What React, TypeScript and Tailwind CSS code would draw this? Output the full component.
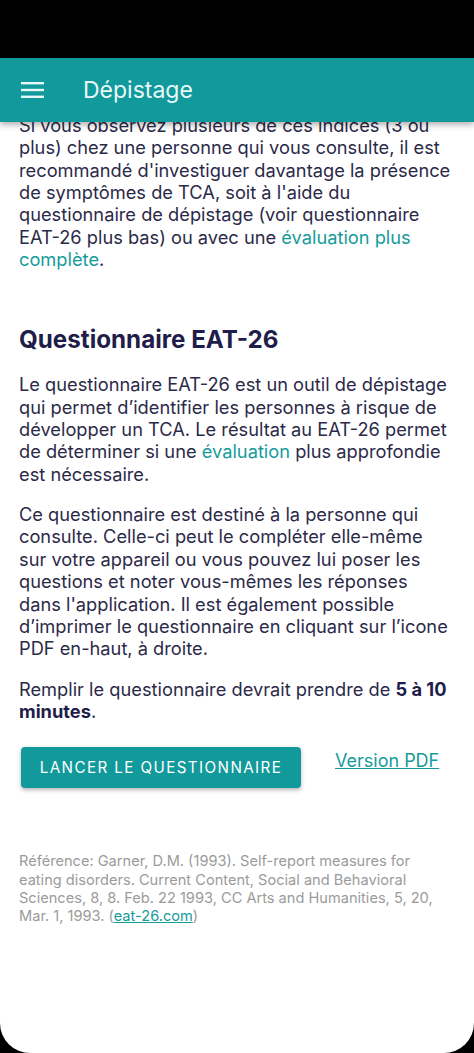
import React from "react";

const teal = "text-[#169b9b]";

const App = () => {
	return (
		<div className="h-[1053px] w-[474px] overflow-hidden bg-black font-['Inter',sans-serif]">
			<div className="h-[58px] bg-black" />
			<div className="flex h-[995px] flex-col overflow-hidden rounded-b-[30px] bg-white">
				<header className="relative z-10 flex h-[64px] shrink-0 items-center bg-[#11999b] shadow-[0_3px_6px_rgba(0,0,0,0.3)]">
					<svg className="ml-[21px]" width="23" height="16" viewBox="0 0 23 16">
						<rect x="0" y="0" width="23" height="2.4" fill="#e6f7f7" />
						<rect x="0" y="6.8" width="23" height="2.4" fill="#e6f7f7" />
						<rect x="0" y="13.6" width="23" height="2.4" fill="#e6f7f7" />
					</svg>
					<h1 className="ml-[39px] text-[23px] text-[#e8f8f8]">Dépistage</h1>
				</header>

				<main className="-mt-[8px] pl-[19px] pr-[21px] text-[18.25px] leading-[22.35px] text-[#2b2a48]">
					<p>
						Si vous observez plusieurs de ces indices (3 ou plus) chez une personne qui vous
						consulte, il est recommandé d'investiguer davantage la présence de symptômes de
						TCA, soit à l'aide du questionnaire de dépistage (voir questionnaire EAT-26 plus
						bas) ou avec une <span className={teal}>évaluation plus complète</span>.
					</p>

					<h2 className="mt-[55px] text-[24.2px] leading-[30px] font-bold text-[#1f1d4a]">
						Questionnaire EAT-26
					</h2>

					<p className="mt-[18px]">
						Le questionnaire EAT-26 est un outil de dépistage qui permet d’identifier les
						personnes à risque de développer un TCA. Le résultat au EAT-26 permet de
						déterminer si une <span className={teal}>évaluation</span> plus approfondie est
						nécessaire.
					</p>

					<p className="mt-[18px]">
						Ce questionnaire est destiné à la personne qui consulte. Celle-ci peut le
						compléter elle-même sur votre appareil ou vous pouvez lui poser les questions et
						noter vous-mêmes les réponses dans l'application. Il est également possible
						d’imprimer le questionnaire en cliquant sur l’icone PDF en-haut, à droite.
					</p>

					<p className="mt-[18px]">
						Remplir le questionnaire devrait prendre de{" "}
						<span className="font-bold text-[#1f1d4a]">5 à 10 minutes</span>.
					</p>

					<div className="mt-[25px] flex items-start">
						<button className="ml-[2px] h-[41px] w-[280px] rounded-[4px] bg-[#11999b] text-[15.2px] tracking-[1.4px] text-white shadow-[0_2px_4px_rgba(0,0,0,0.3)]">
							LANCER LE QUESTIONNAIRE
						</button>
						<a className={`ml-[34px] mt-[3px] text-[18px] underline ${teal}`}>Version PDF</a>
					</div>

					<p className="mt-[64px] text-[14.6px] leading-[18.4px] text-[#9b9b9b]">
						Référence: Garner, D.M. (1993). Self-report measures for eating disorders.
						Current Content, Social and Behavioral Sciences, 8, 8. Feb. 22 1993, CC Arts and
						Humanities, 5, 20, Mar. 1, 1993. (<a className={`underline ${teal}`}>eat-26.com</a>)
					</p>
				</main>
			</div>
		</div>
	);
};

export default App;
